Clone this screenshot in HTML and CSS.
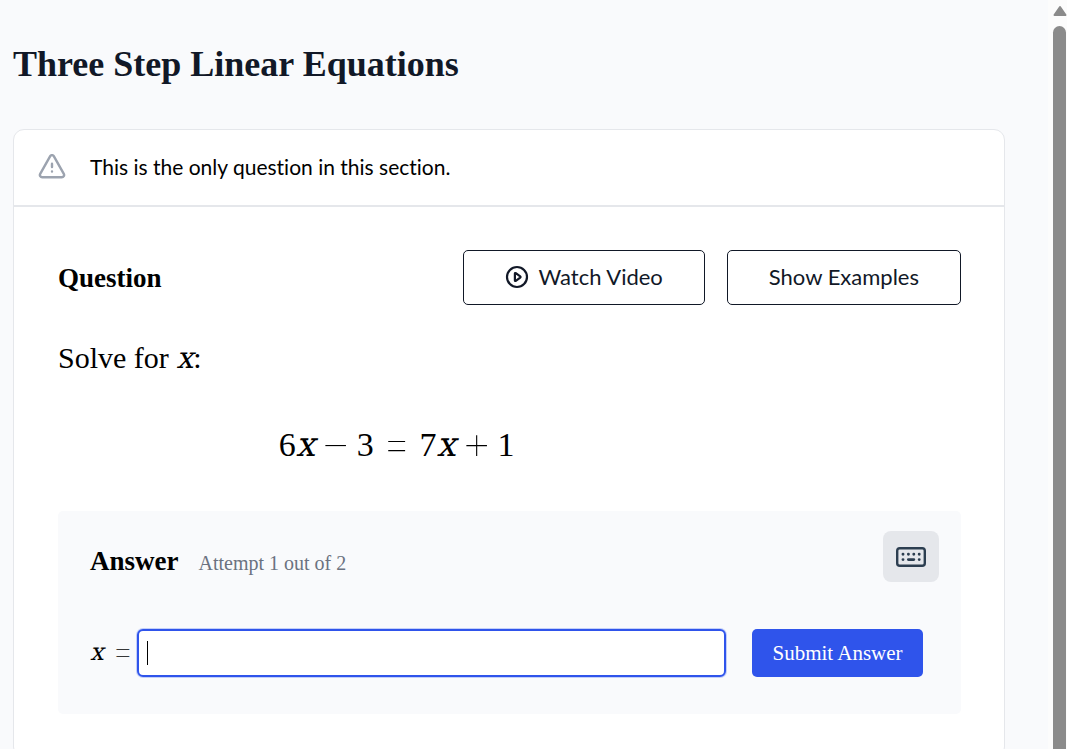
FILE: index.html
```html
<!DOCTYPE html>
<html lang="en">
<head>
<meta charset="utf-8">
<meta name="viewport" content="width=device-width, initial-scale=1">
<title>Three Step Linear Equations</title>
<link rel="stylesheet" href="styles.css">
</head>
<body>
<div class="viewport">
  <main class="page">
    <h1 class="title">Three Step Linear Equations</h1>
    <section class="card">
      <header class="notice">
        <svg class="notice-icon" viewBox="0 0 28 26" fill="none" stroke="#9ca3af" stroke-width="2.4" stroke-linecap="round" stroke-linejoin="round" aria-hidden="true">
          <path d="M12.2 2.2 2.2 19.8C1.3 21.5 2.4 23.2 4.2 23.2h19.6c1.8 0 2.9-1.7 2-3.4L15.8 2.2c-.8-1.4-2.8-1.4-3.6 0Z"/>
          <path d="M14 9.8v3.2M14 17.4v.2"/>
        </svg>
        <p class="notice-text">This is the only question in this section.</p>
      </header>
      <div class="content">
        <div class="question-bar">
          <h2 class="heading">Question</h2>
          <div class="actions">
            <button class="button" type="button">
              <svg class="play-icon" viewBox="0 0 24 24" fill="none" stroke="currentColor" stroke-width="2.2" stroke-linejoin="round" aria-hidden="true">
                <circle cx="12" cy="12" r="10"/>
                <path d="M9.9 8.6v6.8c0 .6.5.7.9.4l4.4-3.2c.5-.4.5-.8 0-1.2l-4.4-3.2c-.4-.3-.9-.2-.9.4Z"/>
              </svg>
              Watch Video
            </button>
            <button class="button" type="button">Show Examples</button>
          </div>
        </div>
        <p class="prompt">Solve for <i class="var">x</i>:</p>
        <p class="equation"><span>6<i class="var">x</i></span><span class="op">−</span><span>3</span><span class="op relation">=</span><span>7<i class="var">x</i></span><span class="op">+</span><span>1</span></p>
        <form class="answer">
          <div class="answer-bar">
            <div class="answer-title">
              <h2 class="heading">Answer</h2>
              <span class="attempt">Attempt 1 out of 2</span>
            </div>
            <button class="keyboard" type="button" aria-label="Keyboard">
              <svg class="keyboard-icon" viewBox="0 0 30 20" aria-hidden="true">
                <rect x="1.2" y="1.2" width="27.6" height="17.6" rx="2.6" fill="none" stroke="#2c3e50" stroke-width="2.4"/>
                <path d="M7 7.2h.01M12.4 7.2h.01M17.8 7.2h.01M23.2 7.2h.01M7 12.6h.01M12.4 12.6h5.4M23.2 12.6h.01" fill="none" stroke="#2c3e50" stroke-width="2.9" stroke-linecap="round"/>
              </svg>
            </button>
          </div>
          <div class="answer-row">
            <label class="answer-label" for="answer"><i class="var">x</i><span class="op">=</span></label>
            <input class="answer-input" id="answer" type="text" autocomplete="off">
            <button class="submit" type="submit">Submit Answer</button>
          </div>
        </form>
      </div>
    </section>
  </main>
  <div class="scrollbar" aria-hidden="true">
    <svg class="scroll-arrow" viewBox="0 0 14 12"><path d="M7 2 12.5 10h-11Z" fill="#8b8b8b" stroke="#8b8b8b" stroke-width="2" stroke-linejoin="round"/></svg>
    <div class="scroll-thumb"></div>
  </div>
</div>
</body>
</html>
```
FILE: styles.css
```css
* {
  box-sizing: border-box;
}

body {
  margin: 0;
  background: #f9fafc;
  color: #000;
  font-family: "Liberation Serif", serif;
}

h1, h2, p {
  margin: 0;
}

button, input {
  font: inherit;
}

.viewport {
  display: flex;
  height: 100vh;
  overflow: hidden;
}

.page {
  flex: 1;
  display: flex;
  flex-direction: column;
  padding: 42px 43px 0 13px;
}

.title {
  color: #111827;
  font-size: 36px;
  font-weight: 700;
  line-height: 44px;
  margin-bottom: 43px;
}

.card {
  flex: 1 0 auto;
  background: #fff;
  border: 1px solid #e5e7eb;
  border-radius: 11px;
}

.notice {
  display: flex;
  align-items: center;
  gap: 24px;
  padding: 21px 24px 22px;
  border-bottom: 2px solid #e5e7eb;
}

.notice-icon {
  width: 28px;
  height: 26px;
}

.notice-text {
  font-family: Lato, sans-serif;
  font-size: 21px;
  font-variant-ligatures: none;
  line-height: 32px;
}

.content {
  padding: 43px 43px 43px 44px;
}

.question-bar {
  display: flex;
  justify-content: space-between;
  align-items: center;
}

.heading {
  font-size: 27px;
  font-weight: 700;
  line-height: 36px;
}

.actions {
  display: flex;
  gap: 22px;
}

.button {
  display: flex;
  align-items: center;
  gap: 9px;
  height: 55px;
  padding: 0 41px 2px;
  background: #fff;
  border: 1px solid #111827;
  border-radius: 5px;
  color: #111827;
  font-family: Lato, sans-serif;
  font-size: 22px;
  line-height: 32px;
}

.play-icon {
  width: 24px;
  height: 24px;
}

.prompt {
  margin-top: 33px;
  font-size: 30px;
  line-height: 40px;
}

.var {
  font-family: "DejaVu Math TeX Gyre", "Liberation Serif", serif;
}

.op {
  padding-bottom: 6px;
  font-family: Inter, sans-serif;
  font-size: 50px;
  font-weight: 100;
}

.equation {
  display: flex;
  align-items: center;
  justify-content: center;
  gap: 5px;
  width: 75%;
  height: 48px;
  margin: 42px 0;
  font-size: 34px;
  line-height: 48px;
}

.relation {
  margin: 0 2px;
}

.answer {
  padding: 20px 22px 37px 32px;
  background: #f9fafc;
  border-radius: 5px;
}

.answer-bar {
  display: flex;
  justify-content: space-between;
}

.answer-title {
  display: flex;
  align-items: baseline;
  gap: 20px;
  padding-top: 12px;
}

.attempt {
  color: #6b7280;
  font-size: 20px;
}

.keyboard {
  display: grid;
  place-items: center;
  width: 56px;
  height: 51px;
  padding: 0;
  background: #e5e7eb;
  border: 0;
  border-radius: 8px;
}

.keyboard-icon {
  width: 30px;
  height: 20px;
}

.answer-row {
  display: flex;
  align-items: center;
  margin: 47px 16px 0 0;
}

.answer-label {
  display: flex;
  align-items: center;
  justify-content: space-between;
  width: 45px;
  height: 48px;
  margin-right: 2px;
  font-size: 24px;
  line-height: 48px;
}

.answer-label .op {
  font-size: 38px;
}

.answer-input {
  flex: 1;
  min-width: 0;
  height: 48px;
  padding: 0 10px;
  /* resting text cursor */
  background: linear-gradient(#000, #000) 8px center / 1px 24px no-repeat #fff;
  border: 2px solid #2f54eb;
  border-radius: 6px;
  box-shadow: 0 0 0 1px #c3cff9;
  outline: 0;
  font-size: 22px;
}

.submit {
  width: 171px;
  height: 48px;
  margin-left: 26px;
  padding: 0;
  background: #2f54eb;
  border: 0;
  border-radius: 5px;
  color: #fff;
  font-size: 21px;
}

.scrollbar {
  display: flex;
  flex-direction: column;
  align-items: center;
  gap: 9px;
  width: 19px;
  padding: 5px 0 0 4px;
  background: #fcfcfc;
}

.scroll-arrow {
  width: 14px;
  height: 12px;
}

.scroll-thumb {
  flex: 1;
  width: 13px;
  background: #8b8b8b;
  border-radius: 7px 7px 0 0;
}
```
